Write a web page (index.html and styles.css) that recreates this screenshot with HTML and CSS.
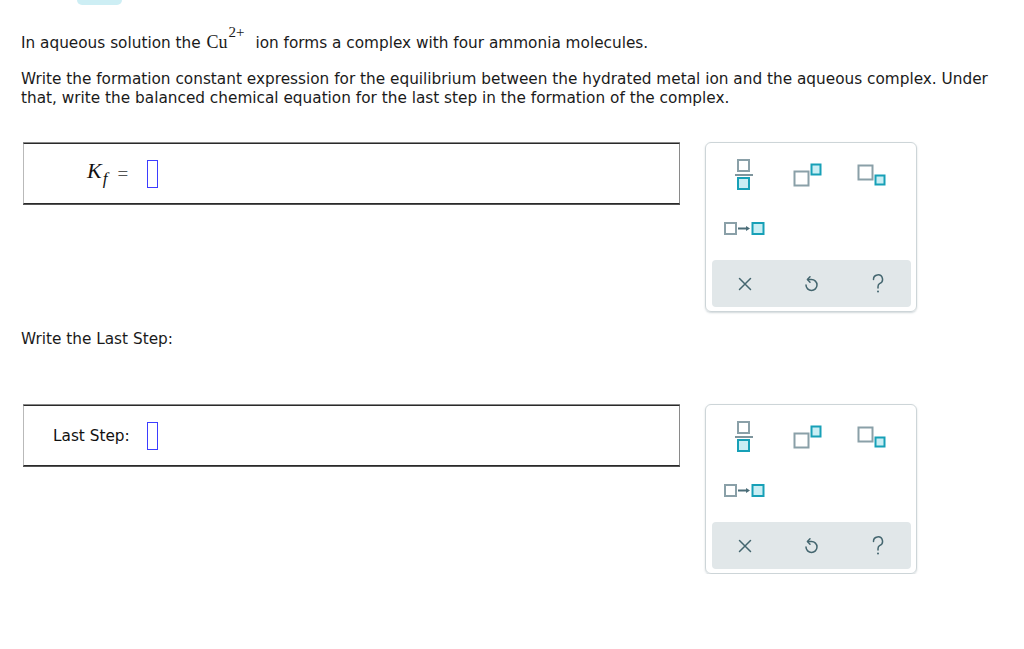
FILE: index.html
```html
<!DOCTYPE html>
<html>
<head>
<meta charset="utf-8">
<link rel="stylesheet" href="styles.css">
</head>
<body>
<div class="tab"></div>
<div class="content">
  <p class="intro">In aqueous solution the <span class="chem">Cu<sup>2+</sup></span> ion forms a complex with four ammonia molecules.</p>
  <p class="instr">Write the formation constant expression for the equilibrium between the hydrated metal ion and the aqueous complex. Under that, write the balanced chemical equation for the last step in the formation of the complex.</p>

  <div class="row row-first">
    <div class="answer">
      <span class="kf"><i>K</i><sub><i>f</i></sub></span>
      <span class="eq">=</span>
      <span class="slot"></span>
    </div>
    <div class="palette">
      <div class="tools">
        <div class="tool">
          <svg width="20" height="32" viewBox="0 0 20 32"><rect class="g" x="4" y="1" width="11" height="11"/><line x1="1" y1="16" x2="19" y2="16" class="ln"/><rect class="c" x="4" y="19" width="11" height="11"/></svg>
        </div>
        <div class="tool">
          <svg width="30" height="24" viewBox="0 0 30 24"><rect class="g" x="1.5" y="8.5" width="14" height="14"/><rect class="c" x="18.5" y="1.5" width="9" height="10"/></svg>
        </div>
        <div class="tool">
          <svg width="30" height="22" viewBox="0 0 30 22"><rect class="g" x="1.5" y="1.5" width="14" height="14"/><rect class="c" x="18.5" y="11.5" width="9" height="9"/></svg>
        </div>
        <div class="tool">
          <svg width="41" height="14" viewBox="0 0 41 14"><rect class="g" x="1" y="1" width="11" height="11"/><line class="ar" x1="14" y1="6.5" x2="23" y2="6.5"/><path class="ah" d="M22 4 L26 6.5 L22 9 Z"/><rect class="c" x="28.5" y="1" width="11" height="11"/></svg>
        </div>
      </div>
      <div class="bar">
        <div class="btn"><svg width="14" height="14" viewBox="0 0 14 14"><path class="ic" d="M1.5 1.5 L12.5 12.5 M12.5 1.5 L1.5 12.5"/></svg></div>
        <div class="btn"><svg width="14" height="18" viewBox="0 0 14 18"><path class="ic" d="M2 10 A5.5 5.5 0 1 0 7.5 4.5 L4 4.5"/><path class="ic" d="M6 1.8 L3.4 4.5 L6 7.2"/></svg></div>
        <div class="btn"><svg width="12" height="20" viewBox="0 0 12 20"><path class="ic" d="M1.5 5.5 A4.5 4.5 0 1 1 7.5 9.6 C6.3 10.3 6 11 6 12.8 L6 14"/><circle cx="6" cy="17.6" r="1" class="dot"/></svg></div>
      </div>
    </div>
  </div>

  <p class="label">Write the Last Step:</p>

  <div class="row row-second">
    <div class="answer">
      <span class="ls">Last Step:</span>
      <span class="slot slot-ls"></span>
    </div>
    <div class="palette">
      <div class="tools">
        <div class="tool">
          <svg width="20" height="32" viewBox="0 0 20 32"><rect class="g" x="4" y="1" width="11" height="11"/><line x1="1" y1="16" x2="19" y2="16" class="ln"/><rect class="c" x="4" y="19" width="11" height="11"/></svg>
        </div>
        <div class="tool">
          <svg width="30" height="24" viewBox="0 0 30 24"><rect class="g" x="1.5" y="8.5" width="14" height="14"/><rect class="c" x="18.5" y="1.5" width="9" height="10"/></svg>
        </div>
        <div class="tool">
          <svg width="30" height="22" viewBox="0 0 30 22"><rect class="g" x="1.5" y="1.5" width="14" height="14"/><rect class="c" x="18.5" y="11.5" width="9" height="9"/></svg>
        </div>
        <div class="tool">
          <svg width="41" height="14" viewBox="0 0 41 14"><rect class="g" x="1" y="1" width="11" height="11"/><line class="ar" x1="14" y1="6.5" x2="23" y2="6.5"/><path class="ah" d="M22 4 L26 6.5 L22 9 Z"/><rect class="c" x="28.5" y="1" width="11" height="11"/></svg>
        </div>
      </div>
      <div class="bar">
        <div class="btn"><svg width="14" height="14" viewBox="0 0 14 14"><path class="ic" d="M1.5 1.5 L12.5 12.5 M12.5 1.5 L1.5 12.5"/></svg></div>
        <div class="btn"><svg width="14" height="18" viewBox="0 0 14 18"><path class="ic" d="M2 10 A5.5 5.5 0 1 0 7.5 4.5 L4 4.5"/><path class="ic" d="M6 1.8 L3.4 4.5 L6 7.2"/></svg></div>
        <div class="btn"><svg width="12" height="20" viewBox="0 0 12 20"><path class="ic" d="M1.5 5.5 A4.5 4.5 0 1 1 7.5 9.6 C6.3 10.3 6 11 6 12.8 L6 14"/><circle cx="6" cy="17.6" r="1" class="dot"/></svg></div>
      </div>
    </div>
  </div>
</div>
</body>
</html>
```
FILE: styles.css
```css
html, body {
  margin: 0;
  padding: 0;
  background: #ffffff;
}
body {
  font-family: "DejaVu Sans", Verdana, sans-serif;
  font-size: 15.3px;
  color: #1a1a1a;
}
.tab {
  width: 45px;
  height: 5px;
  margin-left: 77px;
  background: #cdeef4;
  border-radius: 0 0 9px 9px;
}
.content {
  padding: 0 21px;
}
p {
  margin: 0;
  line-height: 19px;
}
.intro {
  margin-top: 28px;
}
.chem {
  font-family: "Liberation Serif", "Times New Roman", serif;
  font-size: 18px;
  margin-left: 1px;
}
.chem sup {
  font-size: 15px;
  vertical-align: 0;
  position: relative;
  top: -11px;
  margin-left: 1px;
  margin-right: 6px;
}
.instr {
  margin-top: 17px;
}
.row {
  display: flex;
  align-items: flex-start;
  gap: 25px;
}
.row-first {
  margin-top: 34px;
}
.row-second {
  margin-top: 55px;
}
.label {
  margin-top: 18px;
}
.answer {
  width: 655px;
  height: 59px;
  margin-left: 2px;
  margin-top: 1px;
  border-top: 1px solid #2a2a2a;
  border-bottom: 1px solid #2a2a2a;
  border-left: 1px solid #b9b9b9;
  border-right: 1px solid #8a8a8a;
  box-shadow: 0 1px 0 #555, 0 -1px 0 #888;
  display: flex;
  align-items: center;
  flex-shrink: 0;
}
.kf {
  font-family: "Liberation Serif", "Times New Roman", serif;
  font-size: 22px;
  margin-left: 63px;
  color: #111;
}
.kf sub {
  font-size: 17px;
  vertical-align: -6px;
  margin-left: 1px;
}
.eq {
  font-family: "Liberation Serif", serif;
  font-size: 19px;
  color: #555;
  margin-left: 10px;
}
.slot {
  display: inline-block;
  width: 9px;
  height: 26px;
  border: 1.5px solid #3d3dff;
  margin-left: 19px;
}
.ls {
  margin-left: 29px;
  color: #111;
}
.slot-ls {
  margin-left: 17px;
}
.palette {
  width: 212px;
  height: 170px;
  box-sizing: border-box;
  border: 1px solid #cdd5d8;
  border-radius: 6px;
  box-shadow: 0 1px 2px rgba(120, 140, 150, 0.35);
  padding: 5px 5px 0 6px;
  flex-shrink: 0;
  display: flex;
  flex-direction: column;
}
.tools {
  display: grid;
  grid-template-columns: 64px 64px 64px;
  grid-auto-rows: 54px;
}
.tool {
  display: flex;
  align-items: center;
  justify-content: center;
}
.bar {
  margin-top: 4px;
  width: 199px;
  height: 47px;
  background: #e1e7e9;
  border-radius: 4px;
  display: flex;
}
.btn {
  flex: 1;
  display: flex;
  align-items: center;
  justify-content: center;
}
svg { display: block; }
.g {
  fill: #ffffff;
  stroke: #8aa0a8;
  stroke-width: 2;
}
.c {
  fill: #c9eef4;
  stroke: #17a0b7;
  stroke-width: 2;
}
.ln {
  stroke: #7e959d;
  stroke-width: 2;
}
.ar {
  stroke: #4b6d78;
  stroke-width: 2;
}
.ah {
  fill: #4b6d78;
}
.ic {
  fill: none;
  stroke: #44666f;
  stroke-width: 1.5;
  stroke-linecap: round;
  stroke-linejoin: round;
}
.dot {
  fill: #44666f;
}
```
